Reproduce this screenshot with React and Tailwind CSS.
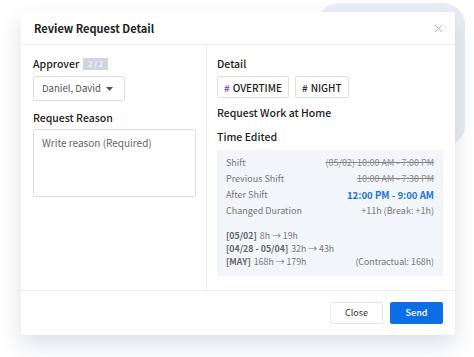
export default function App() {
  const shiftRows = [
    { label: "Shift", value: "(05/02) 10:00 AM - 7:00 PM", kind: "strike" },
    { label: "Previous Shift", value: "10:00 AM - 7:30 PM", kind: "strike" },
    { label: "After Shift", value: "12:00 PM - 9:00 AM", kind: "blue" },
    { label: "Changed Duration", value: "+11h (Break: +1h)", kind: "plain" },
  ];

  return (
    <div
      className="relative w-[474px] h-[357px] overflow-hidden bg-white whitespace-nowrap"
      style={{ fontFamily: '"Noto Sans CJK KR", "Noto Sans", sans-serif' }}
    >
      {/* backdrop shape */}
      <div className="absolute left-[317px] top-[3px] w-[148px] h-[144px] rounded-[22px] bg-[#e9eef6]" />

      <div className="relative pt-[12px] pl-[21px]">
        <div className="w-[434px] h-[323px] bg-white rounded-[3px] shadow-[0_10px_22px_rgba(40,60,100,0.16)] flex flex-col">
          {/* Header */}
          <div className="h-[33px] flex items-center justify-between pl-[13px] pr-[12px] border-b border-[#eceef1]">
            <span className="text-[11px] font-bold text-[#222] leading-none">
              Review Request Detail
            </span>
            <svg width="9" height="9" viewBox="0 0 10 10" className="text-[#a9adb3]">
              <path d="M1 1 L9 9 M9 1 L1 9" stroke="currentColor" strokeWidth="1" />
            </svg>
          </div>

          {/* Body */}
          <div className="flex h-[245px]">
            {/* Left */}
            <div className="w-[186px] border-r border-[#eceef1] pl-[12px] pt-[10px]">
              <div className="flex items-center h-[18px]">
                <span className="text-[10.5px] font-medium text-[#222]">Approver</span>
                <span className="ml-[4px] h-[12px] px-[5px] flex items-center bg-[#cdd6e0] text-white text-[7.5px] leading-none">
                  2 / 2
                </span>
              </div>
              <div className="mt-[3px] w-[92px] h-[25px] border border-[#dcdfe3] rounded-[2px] pl-[8px] pr-[11px] flex items-center justify-between">
                <span className="text-[9.6px] text-[#555] leading-none">Daniel, David</span>
                <svg width="7" height="4" viewBox="0 0 7 4">
                  <path d="M0 0 H7 L3.5 4 Z" fill="#555" />
                </svg>
              </div>
              <div className="mt-[8px] h-[18px] flex items-center text-[10.5px] font-medium text-[#222]">
                Request Reason
              </div>
              <div className="mt-[2px] w-[163px] h-[68px] border border-[#dcdfe3] rounded-[2px] px-[8px] pt-[5px] text-[10px] leading-[16px] text-[#666]">
                Write reason (Required)
              </div>
            </div>

            {/* Right */}
            <div className="flex-1 pl-[10px] pt-[10px]">
              <div className="h-[18px] flex items-center text-[10.5px] font-medium text-[#222]">
                Detail
              </div>
              <div className="mt-[3px] flex gap-[6px]">
                <span className="h-[22px] px-[6px] flex items-center border border-[#dcdfe3] rounded-[2px] text-[10px] font-medium text-[#222]">
                  <span className="text-[#6a3fd4] mr-[3px]">#</span>OVERTIME
                </span>
                <span className="h-[22px] px-[6px] flex items-center border border-[#dcdfe3] rounded-[2px] text-[10px] font-medium text-[#222]">
                  <span className="mr-[3px]">#</span>NIGHT
                </span>
              </div>
              <div className="mt-[6px] h-[18px] flex items-center text-[10.5px] font-medium text-[#222]">
                Request Work at Home
              </div>
              <div className="mt-[6px] h-[18px] flex items-center text-[10.5px] font-medium text-[#222]">
                Time Edited
              </div>
              <div className="mt-[4px] w-[226px] h-[126px] bg-[#f2f5fa] px-[9px] pt-[5px] text-[9px] text-[#777]">
                {shiftRows.map((r) => (
                  <div key={r.label} className="flex justify-between h-[16px] items-center">
                    <span>{r.label}</span>
                    <span
                      className={
                        r.kind === "strike"
                          ? "line-through text-[#888]"
                          : r.kind === "blue"
                          ? "text-[#1a72d8] font-semibold text-[9.6px]"
                          : "text-[#777]"
                      }
                    >
                      {r.value}
                    </span>
                  </div>
                ))}
                <div className="mt-[10px] text-[8.8px]">
                  <div className="h-[13px] flex items-center">
                    <span className="font-semibold text-[#666] mr-[3px]">[05/02]</span>8h → 19h
                  </div>
                  <div className="h-[13px] flex items-center">
                    <span className="font-semibold text-[#666] mr-[3px]">[04/28 - 05/04]</span>32h → 43h
                  </div>
                  <div className="h-[13px] flex items-center justify-between">
                    <span className="flex items-center">
                      <span className="font-semibold text-[#666] mr-[3px]">[MAY]</span>168h → 179h
                    </span>
                    <span>(Contractual: 168h)</span>
                  </div>
                </div>
              </div>
            </div>
          </div>

          {/* Footer */}
          <div className="flex-1 border-t border-[#eceef1] flex items-center justify-end gap-[7px] pr-[12px]">
            <button className="w-[53px] h-[22px] border border-[#e4e6ea] rounded-[2px] text-[9px] text-[#333] bg-white">
              Close
            </button>
            <button className="w-[53px] h-[22px] rounded-[2px] text-[9px] font-medium text-white bg-[#0b6fe3]">
              Send
            </button>
          </div>
        </div>
      </div>
    </div>
  );
}
